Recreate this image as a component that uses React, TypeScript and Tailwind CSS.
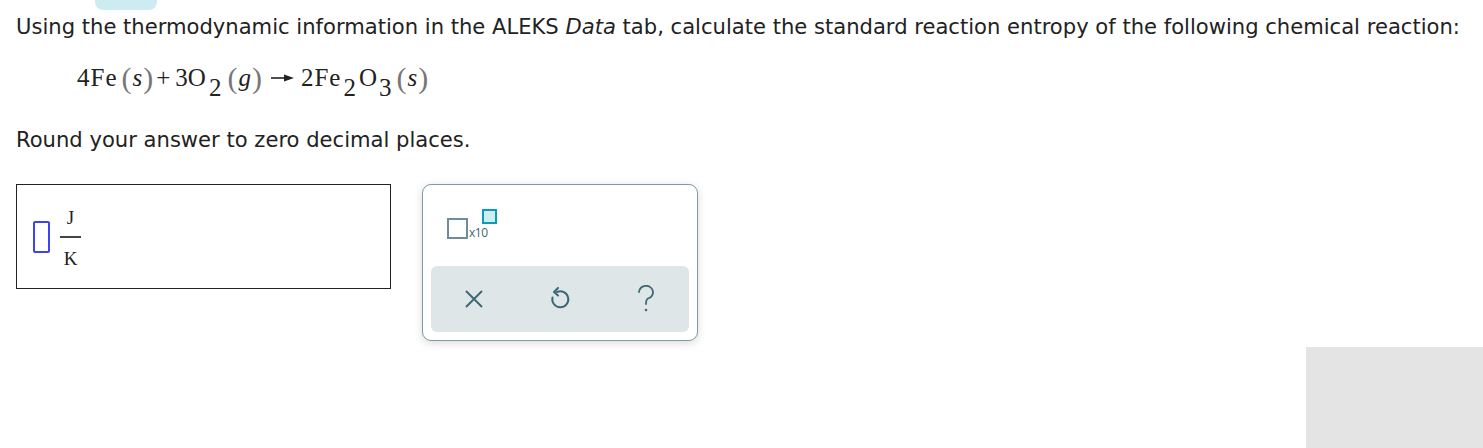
import React from "react";

const serif = { fontFamily: '"Liberation Serif", "Times New Roman", serif' };

const Sub: React.FC<{ children: React.ReactNode; className?: string }> = ({ children, className = "" }) => (
  <span className={`relative top-[10px] ${className}`}>{children}</span>
);

const Phase: React.FC<{ children: React.ReactNode; className?: string }> = ({ children, className = "" }) => (
  <span className={`inline-flex items-center ${className}`}>
    <span className="text-[30px] leading-none text-[#777]">(</span>
    <span className="mx-[1px] italic">{children}</span>
    <span className="text-[30px] leading-none text-[#777]">)</span>
  </span>
);

const App: React.FC = () => {
  return (
    <div
      className="relative h-[448px] w-full overflow-hidden bg-white text-[#222]"
      style={{ fontFamily: '"DejaVu Sans", Verdana, sans-serif' }}
    >
      <div className="ml-[95px] h-[10px] w-[62px] rounded-b-[8px] bg-[#cdecf2]" />

      <div className="px-[16px]">
        <p className="mt-[4px] whitespace-nowrap text-[21.1px] leading-[26px]">
          Using the thermodynamic information in the ALEKS <i>Data</i> tab, calculate the standard reaction
          entropy of the following chemical reaction:
        </p>

        <div className="mt-[20px] ml-[61px] flex h-[36px] items-center text-[25px] text-[#222]" style={serif}>
          <span className="tracking-[1px]">4Fe</span>
          <Phase className="ml-[4px]">s</Phase>
          <span className="ml-[3px]">+</span>
          <span className="ml-[5px]">3O</span>
          <Sub className="ml-[3px]">2</Sub>
          <Phase className="ml-[6px]">g</Phase>
          <svg className="ml-[9px]" width="23" height="10" viewBox="0 0 23 10">
            <path d="M0 5 H15" stroke="#222" strokeWidth="1.6" />
            <path d="M13 1.5 L23 5 L13 8.5 Z" fill="#222" />
          </svg>
          <span className="ml-[7px] tracking-[1px]">2Fe</span>
          <Sub className="ml-[2px]">2</Sub>
          <span className="ml-[3px]">O</span>
          <Sub className="ml-[2px]">3</Sub>
          <Phase className="ml-[5px]">s</Phase>
        </div>

        <p className="mt-[31px] text-[21.1px] leading-[26px]">Round your answer to zero decimal places.</p>

        <div className="mt-[31px] flex items-start gap-[31px]">
          <div className="flex h-[105px] w-[375px] items-center border border-[#222] pl-[16px]">
            <div className="h-[32px] w-[17px] rounded-[2px] border-2 border-[#3b44f0]" />
            <div className="ml-[10px] flex flex-col items-center pt-[4px] text-[19px] text-[#222]" style={serif}>
              <span className="leading-[18px]">J</span>
              <span className="mt-[9px] mb-[12px] h-[1.5px] w-[21px] bg-[#444]" />
              <span className="leading-[18px]">K</span>
            </div>
          </div>

          <div className="flex h-[157px] w-[276px] flex-col rounded-[9px] border border-[#7b9aa3] bg-white px-[8px] pb-[8px] shadow-[0_2px_8px_rgba(0,0,0,0.15)]">
            <div className="flex h-[81px] items-start pl-[16px] pt-[23px]">
              <div className="relative h-[34px] w-[56px]">
                <div className="absolute left-0 top-[10px] h-[21px] w-[21px] border-2 border-[#6e8d96] bg-white" />
                <span
                  className="absolute left-[22px] top-[19px] text-[12px] leading-[12px] tracking-[-0.5px] text-[#3f6570]"
                  style={{ fontFamily: '"Open Sans", sans-serif' }}
                >
                  x10
                </span>
                <div className="absolute left-[35px] top-[1px] h-[15px] w-[15px] border-2 border-[#0c9db6] bg-[#cdeef3]" />
              </div>
            </div>
            <div className="grid h-[66px] grid-cols-3 items-center justify-items-center rounded-[6px] bg-[#dfe6e8] text-[#3d6976]">
              <svg width="20" height="20" viewBox="0 0 20 20" fill="none" stroke="currentColor" strokeWidth="2">
                <path d="M2 2 L18 18 M18 2 L2 18" />
              </svg>
              <svg width="22" height="24" viewBox="0 0 22 24" fill="none" stroke="currentColor" strokeWidth="2" strokeLinecap="round">
                <path d="M8 5 A 8 8 0 1 1 3.5 10.5" />
                <path d="M9 1 L5 5 L9 8.5" strokeLinejoin="round" />
              </svg>
              <svg width="20" height="28" viewBox="0 0 20 28" fill="none" stroke="currentColor" strokeWidth="1.8" strokeLinecap="round">
                <path d="M3 7 A 7 6.5 0 1 1 12 13.5 C 10 14.5 10 16 10 19" />
                <circle cx="10" cy="25" r="1.3" fill="currentColor" stroke="none" />
              </svg>
            </div>
          </div>
        </div>
      </div>

      <div className="absolute bottom-0 right-0 h-[101px] w-[177px] bg-[#e4e4e4]" />
    </div>
  );
};

export default App;
